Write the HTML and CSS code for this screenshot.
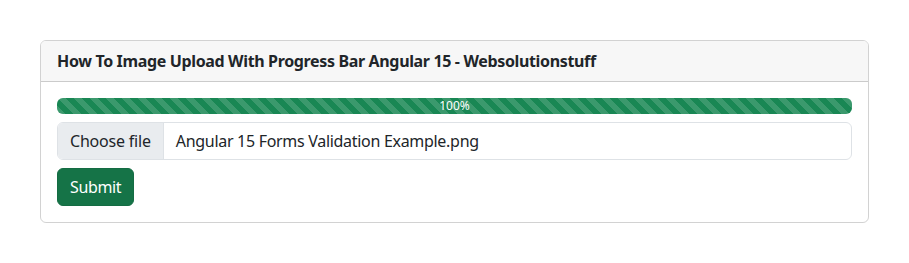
FILE: index.html
```html
<!DOCTYPE html>
<html>
<head>
<meta charset="utf-8">
<link rel="stylesheet" href="styles.css">
</head>
<body>
<div class="container">
  <div class="card">
    <div class="card-header">How To Image Upload With Progress Bar Angular 15 - Websolutionstuff</div>
    <div class="card-body">
      <div class="progress">
        <div class="progress-bar" style="width: 100%">100%</div>
      </div>
      <div class="file-input">
        <span class="file-btn">Choose file</span>
        <span class="file-name">Angular 15 Forms Validation Example.png</span>
      </div>
      <button class="btn-submit">Submit</button>
    </div>
  </div>
</div>
</body>
</html>
```
FILE: styles.css
```css
* { box-sizing: border-box; }
html, body { margin: 0; padding: 0; background: #fff; }
body {
  font-family: "Noto Sans", "Open Sans", sans-serif;
  font-size: 16px;
  line-height: 1.5;
  color: #212529;
  letter-spacing: -0.35px;
}
.container { padding: 40px 40px; }
.card {
  border: 1px solid rgba(0,0,0,.175);
  border-radius: 6px;
  overflow: hidden;
}
.card-header {
  background: #f7f7f7;
  border-bottom: 1px solid rgba(0,0,0,.175);
  padding: 8px 16px;
  font-weight: 700;
  height: 41px;
}
.card-body {
  padding: 16px;
  display: flex;
  flex-direction: column;
  align-items: flex-start;
}
.progress {
  width: 100%;
  height: 16px;
  border-radius: 6px;
  background: #e9ecef;
  overflow: hidden;
  display: flex;
}
.progress-bar {
  background-color: #198754;
  background-image: linear-gradient(45deg, rgba(255,255,255,.15) 25%, transparent 25%, transparent 50%, rgba(255,255,255,.15) 50%, rgba(255,255,255,.15) 75%, transparent 75%, transparent);
  background-size: 16px 16px;
  color: #fff;
  font-size: 12px;
  line-height: 16px;
  text-align: center;
  letter-spacing: 0;
}
.file-input {
  margin-top: 8px;
  width: 100%;
  height: 38px;
  border: 1px solid #dee2e6;
  border-radius: 6px;
  display: flex;
  align-items: stretch;
  overflow: hidden;
}
.file-btn {
  background: #e9ecef;
  border-right: 1px solid #dee2e6;
  padding: 6px 12px;
  line-height: 24px;
  letter-spacing: -0.2px;
}
.file-name {
  padding: 6px 12px;
  line-height: 24px;
  letter-spacing: -0.3px;
}
.btn-submit {
  margin-top: 8px;
  font-family: inherit;
  font-size: 16px;
  letter-spacing: inherit;
  line-height: 24px;
  padding: 6px 12px;
  background: #157347;
  color: #fff;
  border: 1px solid #146c43;
  border-radius: 6px;
}
```
